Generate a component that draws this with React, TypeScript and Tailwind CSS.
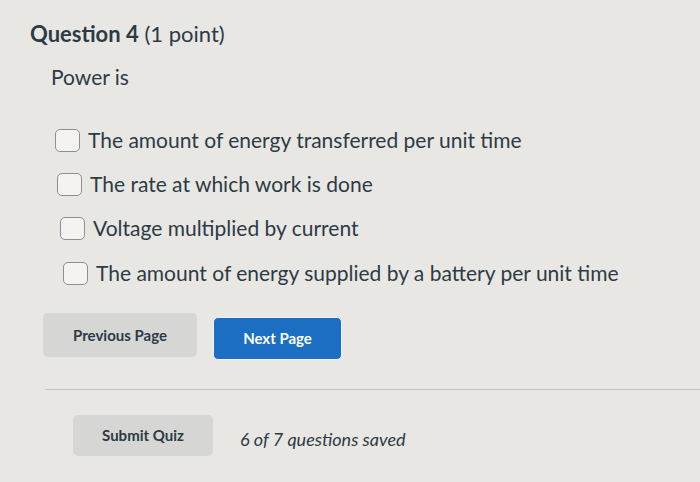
import React from "react";

const options = [
  { text: "The amount of energy transferred per unit time", pad: "pl-[55px]", mt: "mt-0" },
  { text: "The rate at which work is done", pad: "pl-[57px]", mt: "mt-[20px]" },
  { text: "Voltage multiplied by current", pad: "pl-[60px]", mt: "mt-[20px]" },
  { text: "The amount of energy supplied by a battery per unit time", pad: "pl-[63px]", mt: "mt-[21px]" },
];

export default function App() {
  return (
    <div className="w-[700px] h-[482px] overflow-hidden bg-[#e8e7e4] text-[#2d3b45] font-['Lato','Liberation_Sans',sans-serif]">
      {/* Question header */}
      <div className="pt-[20px] pl-[30px] text-[22px] leading-[28px]">
        <span className="font-bold">Question 4</span> <span>(1 point)</span>
      </div>
      <div className="pl-[51px] mt-[16px] text-[21px] leading-[26px]">Power is</div>

      {/* Answers */}
      <div className="mt-[38px] text-[21px] leading-[24px]">
        {options.map((o) => (
          <div key={o.text} className={`flex items-center gap-[8px] ${o.pad} ${o.mt}`}>
            <span className="w-[25px] h-[23px] rounded-[5px] border-[1.5px] border-[#8a8f93] bg-[#f4f3f1] shrink-0" />
            <span>{o.text}</span>
          </div>
        ))}
      </div>

      {/* Paging */}
      <div className="flex items-start gap-[16px] pl-[43px] mt-[28px]">
        <button className="w-[154px] h-[44px] rounded-[5px] bg-[#d6d6d5] text-[15px] font-bold text-[#2d3b45]">
          Previous Page
        </button>
        <button className="mt-[4px] w-[129px] h-[43px] rounded-[5px] bg-[#1b6ec2] border border-[#f4f4f4] text-[15px] font-bold text-white">
          Next Page
        </button>
      </div>

      <div className="ml-[45px] mt-[29px] h-px bg-[#c4c4c2]" />

      {/* Submit */}
      <div className="flex items-center pl-[73px] mt-[25px]">
        <button className="w-[140px] h-[41px] rounded-[5px] bg-[#d6d6d5] text-[15px] font-bold text-[#2d3b45]">
          Submit Quiz
        </button>
        <span className="ml-[27px] mt-[8px] text-[18px] italic">6 of 7 questions saved</span>
      </div>
    </div>
  );
}
